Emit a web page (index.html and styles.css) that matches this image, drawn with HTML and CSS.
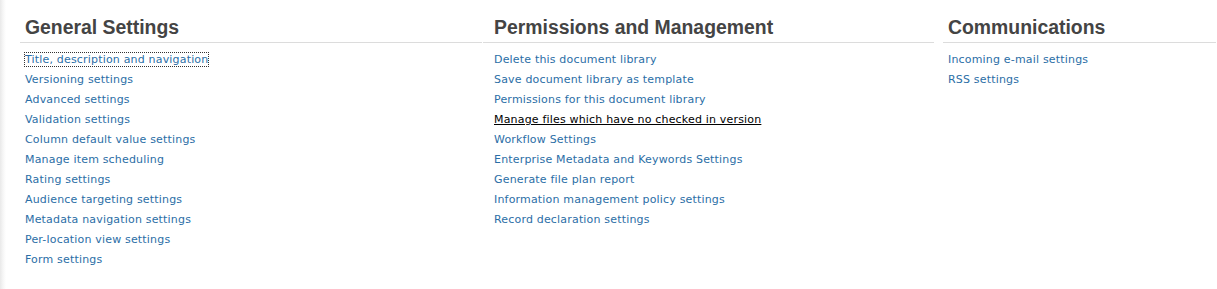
FILE: index.html
```html
<!DOCTYPE html>
<html lang="en">
<head>
  <meta charset="UTF-8" />
  <title>Document Library Settings</title>
  <link rel="stylesheet" href="styles.css">
</head>
<body>
<div class="settings">
  <div class="group general">
    <h3 class="group-title">General Settings</h3>
    <ul class="links">
      <li><a href="#" class="focus">Title, description and navigation</a></li>
      <li><a href="#">Versioning settings</a></li>
      <li><a href="#">Advanced settings</a></li>
      <li><a href="#">Validation settings</a></li>
      <li><a href="#">Column default value settings</a></li>
      <li><a href="#">Manage item scheduling</a></li>
      <li><a href="#">Rating settings</a></li>
      <li><a href="#">Audience targeting settings</a></li>
      <li><a href="#">Metadata navigation settings</a></li>
      <li><a href="#">Per-location view settings</a></li>
      <li><a href="#">Form settings</a></li>
    </ul>
  </div>
  <div class="group permissions">
    <h3 class="group-title">Permissions and Management</h3>
    <ul class="links">
      <li><a href="#">Delete this document library</a></li>
      <li><a href="#">Save document library as template</a></li>
      <li><a href="#">Permissions for this document library</a></li>
      <li><a href="#" class="hover">Manage files which have no checked in version</a></li>
      <li><a href="#">Workflow Settings</a></li>
      <li><a href="#">Enterprise Metadata and Keywords Settings</a></li>
      <li><a href="#">Generate file plan report</a></li>
      <li><a href="#">Information management policy settings</a></li>
      <li><a href="#">Record declaration settings</a></li>
    </ul>
  </div>
  <div class="group communications">
    <h3 class="group-title">Communications</h3>
    <ul class="links">
      <li><a href="#">Incoming e-mail settings</a></li>
      <li><a href="#">RSS settings</a></li>
    </ul>
  </div>
</div>
</body>
</html>
```

FILE: styles.css
```css
html, body {
  margin: 0;
  padding: 0;
  height: 100%;
}
body {
  background: linear-gradient(90deg, #e9e9e9 0, #f6f6f6 3px, #fff 6px);
  font-family: "DejaVu Sans", Verdana, sans-serif;
}
.settings {
  display: flex;
  padding: 14px 0 0 20px;
}
.group {
  flex: none;
}
.general {
  width: 462px;
  margin-right: 1px;
}
.permissions {
  width: 451px;
  margin-right: 9px;
}
.communications {
  width: 273px;
}
.group-title {
  margin: 0;
  height: 28px;
  border-bottom: 1px solid #dcdcdc;
  font-family: "Liberation Sans", Arial, sans-serif;
  font-size: 19.4px;
  font-weight: 700;
  line-height: 26px;
  color: #444;
  padding-left: 5px;
}
.permissions .group-title,
.permissions .links {
  padding-left: 11px;
}
.links {
  list-style: none;
  margin: 0;
  padding: 5px 0 0 5px;
}
.links li {
  height: 20px;
  line-height: 20px;
}
.links a {
  font-size: 11px;
  letter-spacing: 0.18px;
  color: #2b6ea6;
  text-decoration: none;
}
.links a.focus {
  outline: 1px dotted #333;
  outline-offset: 0;
}
.links a.hover {
  color: #000;
  text-decoration: underline;
}
```
